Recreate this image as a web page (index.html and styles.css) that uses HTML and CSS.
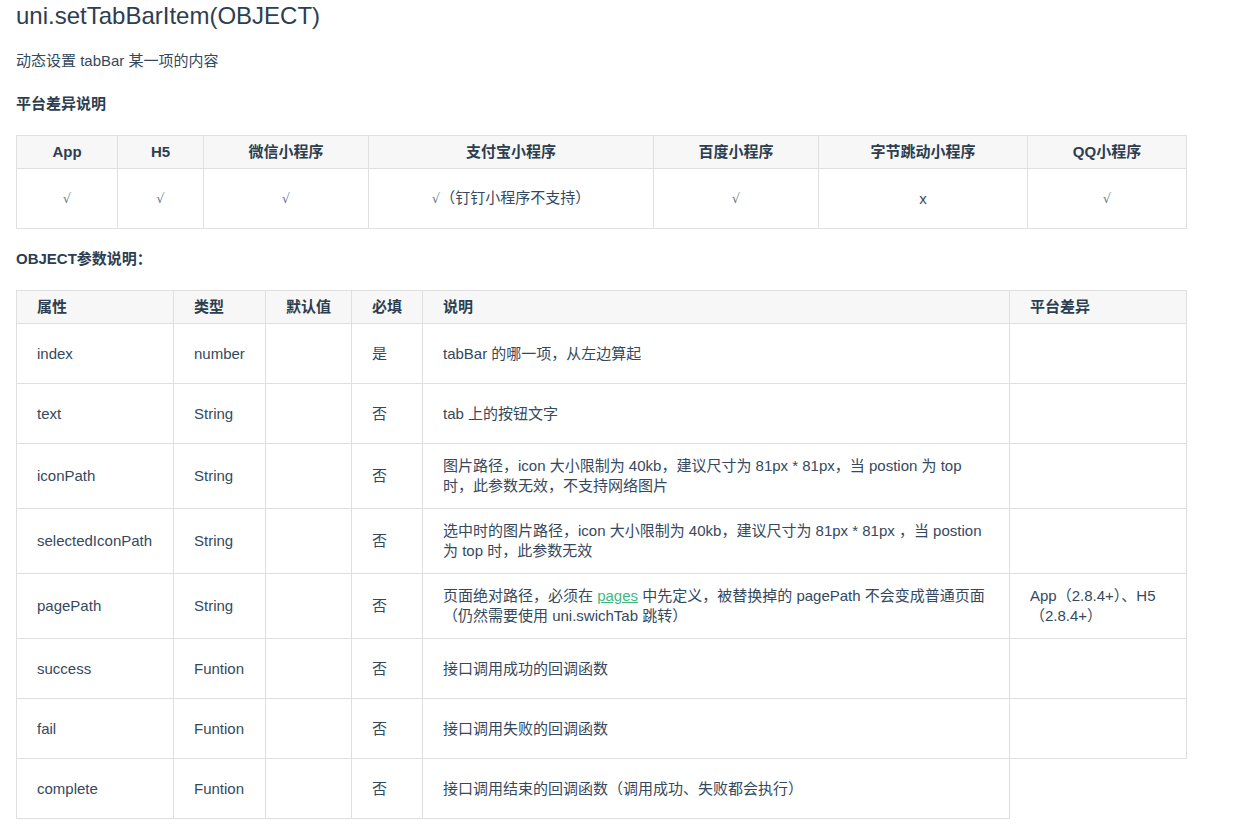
FILE: index.html
```html
<!DOCTYPE html>
<html lang="zh">
<head>
<meta charset="utf-8">
<title>uni.setTabBarItem</title>
<link rel="stylesheet" href="styles.css">
</head>
<body>
<div class="page">
  <h2 class="title">uni.setTabBarItem(OBJECT)</h2>
  <p class="desc">动态设置 tabBar 某一项的内容</p>
  <p class="sub">平台差异说明</p>
  <table class="tbl plat">
    <thead>
      <tr>
        <th class="c-app">App</th>
        <th class="c-h5">H5</th>
        <th class="c-wx">微信小程序</th>
        <th class="c-ali">支付宝小程序</th>
        <th class="c-bd">百度小程序</th>
        <th class="c-tt">字节跳动小程序</th>
        <th class="c-qq">QQ小程序</th>
      </tr>
    </thead>
    <tbody>
      <tr>
        <td><span class="ok">√</span></td>
        <td><span class="ok">√</span></td>
        <td><span class="ok">√</span></td>
        <td><span class="ok">√</span>（钉钉小程序不支持）</td>
        <td><span class="ok">√</span></td>
        <td>x</td>
        <td><span class="ok">√</span></td>
      </tr>
    </tbody>
  </table>
  <p class="sub sub2">OBJECT参数说明：</p>
  <table class="tbl params">
    <thead>
      <tr>
        <th class="p-name">属性</th>
        <th class="p-type">类型</th>
        <th class="p-def">默认值</th>
        <th class="p-req">必填</th>
        <th class="p-desc">说明</th>
        <th class="p-plat">平台差异</th>
      </tr>
    </thead>
    <tbody>
      <tr>
        <td>index</td><td>number</td><td></td><td>是</td><td>tabBar 的哪一项，从左边算起</td><td></td>
      </tr>
      <tr>
        <td>text</td><td>String</td><td></td><td>否</td><td>tab 上的按钮文字</td><td></td>
      </tr>
      <tr>
        <td>iconPath</td><td>String</td><td></td><td>否</td><td>图片路径，icon 大小限制为 40kb，建议尺寸为 81px * 81px，当 postion 为 top 时，此参数无效，不支持网络图片</td><td></td>
      </tr>
      <tr>
        <td>selectedIconPath</td><td>String</td><td></td><td>否</td><td>选中时的图片路径，icon 大小限制为 40kb，建议尺寸为 81px * 81px ，当 postion 为 top 时，此参数无效</td><td></td>
      </tr>
      <tr>
        <td>pagePath</td><td>String</td><td></td><td>否</td><td>页面绝对路径，必须在 <a class="lnk" href="#">pages</a> 中先定义，被替换掉的 pagePath 不会变成普通页面（仍然需要使用 uni.swichTab 跳转）</td><td>App（2.8.4+）、H5（2.8.4+）</td>
      </tr>
      <tr>
        <td>success</td><td>Funtion</td><td></td><td>否</td><td>接口调用成功的回调函数</td><td></td>
      </tr>
      <tr>
        <td>fail</td><td>Funtion</td><td></td><td>否</td><td>接口调用失败的回调函数</td><td></td>
      </tr>
      <tr>
        <td>complete</td><td>Funtion</td><td></td><td>否</td><td>接口调用结束的回调函数（调用成功、失败都会执行）</td>
      </tr>
    </tbody>
  </table>
</div>
</body>
</html>
```

FILE: styles.css
```css
html, body {
  margin: 0;
  padding: 0;
  background: #ffffff;
}

body {
  font-family: "Liberation Sans", Arial, "Noto Sans CJK SC", sans-serif;
  font-size: 15px;
  color: #2c3e50;
}

.page {
  padding: 0 16px;
}

.title {
  margin: 0;
  padding-top: 2px;
  font-size: 24px;
  font-weight: 400;
  line-height: 28px;
  color: #2c3e50;
}

.desc {
  margin: 21px 0 0;
  line-height: 20px;
  color: #34495e;
}

.sub {
  margin: 23px 0 0;
  line-height: 20px;
  font-weight: 700;
  font-size: 15px;
}

.sub2 {
  margin-top: 20px;
}

.tbl {
  border-collapse: collapse;
  width: 1170px;
  table-layout: fixed;
}

.tbl th,
.tbl td {
  border: 1px solid #dfdfdf;
  font-size: 15px;
  line-height: 20px;
}

.tbl th {
  background: #f7f7f7;
  font-weight: 700;
  height: 33px;
  padding: 0 20px;
  box-sizing: border-box;
}

.plat {
  margin-top: 21px;
}

.plat th,
.plat td {
  text-align: center;
  padding: 0 10px;
}

.plat td {
  height: 59px;
  color: #34495e;
}

.ok {
  font-family: "DejaVu Serif", serif;
  font-size: 13px;
  color: #6a7a8e;
}

.c-app { width: 101px; }
.c-h5 { width: 86px; }
.c-wx { width: 165px; }
.c-ali { width: 285px; }
.c-bd { width: 165px; }
.c-tt { width: 209px; }
.c-qq { width: 159px; }

.params {
  margin-top: 21px;
}

.params th {
  text-align: left;
}

.params td {
  height: 60px;
  padding: 12px 20px;
  box-sizing: border-box;
  vertical-align: middle;
  color: #34495e;
}

.p-name { width: 157px; }
.p-type { width: 92px; }
.p-def { width: 86px; }
.p-req { width: 71px; }
.p-desc { width: 587px; }
.p-plat { width: 177px; }

.lnk {
  color: #42b983;
  text-decoration: underline;
}
```
